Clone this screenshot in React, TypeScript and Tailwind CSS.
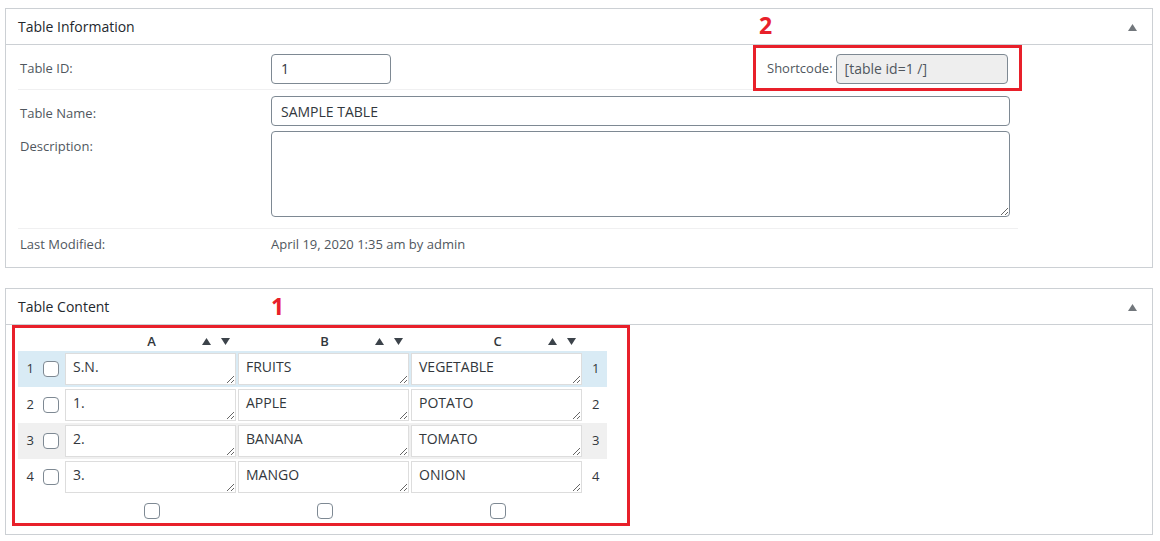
import React from "react";

const font = { fontFamily: '"Open Sans", "Liberation Sans", sans-serif' };

const rows = [
	["S.N.", "FRUITS", "VEGETABLE"],
	["1.", "APPLE", "POTATO"],
	["2.", "BANANA", "TOMATO"],
	["3.", "MANGO", "ONION"],
];

const rowBg = ["bg-[#d9ebf5]", "bg-white", "bg-[#f0f0f0]", "bg-white"];

const Caret = ({ dark }: { dark?: boolean }) => (
	<svg
		width="9"
		height="7"
		viewBox="0 0 9 7"
		className={dark ? "fill-[#3c434a]" : "fill-[#72777c]"}
	>
		<path d="M0 7 L4.5 0 L9 7 Z" />
	</svg>
);

const Box = () => (
	<span className="block w-4 h-4 rounded-[4px] border border-[#7e8993] bg-white" />
);

const PanelHeader = ({ title, mark }: { title: string; mark: React.ReactNode }) => (
	<div className="relative h-[36px] flex items-center px-[12px] border-b border-[#ccd0d4]">
		<h2 className="text-[14px] text-[#23282d]">{title}</h2>
		{mark}
		<span className="ml-auto mr-[3px] mt-[2px]">
			<Caret />
		</span>
	</div>
);

export default function App() {
	return (
		<div className="bg-white w-[1160px] h-[541px] pt-[8px] text-[13px] text-[#50575e]" style={font}>
			{/* Table Information */}
			<div className="ml-[5px] w-[1148px] border border-[#ccd0d4] bg-white">
				<PanelHeader
					title="Table Information"
					mark={
						<span className="absolute left-[753px] top-[5px] text-[23px] font-bold text-[#e8202a] leading-none">
							2
						</span>
					}
				/>
				<div className="relative pl-[12px] w-[1012px]">
					<div className="flex items-center h-[45px] border-b border-[#f0f0f1]">
						<span className="w-[253px] pl-[2px] pt-[4px]">Table ID:</span>
						<div className="w-[120px] h-[30px] mt-[3px] rounded-[4px] border border-[#7e8993] px-[9px] flex items-center text-[14px] text-[#32373c]">
							1
						</div>
						<div className="ml-[376px] mt-[3px] flex items-center gap-[3px]">
							<span>Shortcode:</span>
							<div className="w-[172px] h-[30px] rounded-[4px] border border-[#7e8993] bg-[#eeeeee] px-[8px] flex items-center text-[14px] text-[#50575e]">
								[table id=1 /]
							</div>
						</div>
						<div className="absolute left-[747px] top-[0px] w-[269px] h-[46px] border-[3px] border-[#e8202a]" />
					</div>
					<div className="flex pt-[6px]">
						<span className="w-[253px] pl-[2px] pt-[8px]">Table Name:</span>
						<div className="w-[739px] h-[30px] rounded-[4px] border border-[#7e8993] px-[9px] flex items-center text-[14px] text-[#32373c]">
							SAMPLE TABLE
						</div>
					</div>
					<div className="flex pt-[5px] pb-[11px] border-b border-[#f0f0f1]">
						<span className="w-[253px] pl-[2px] pt-[6px]">Description:</span>
						<textarea
							readOnly
							className="block w-[739px] h-[86px] rounded-[4px] border border-[#7e8993] bg-white outline-none"
						/>
					</div>
					<div className="flex h-[38px] items-start pt-[6px]">
						<span className="w-[253px] pl-[2px]">Last Modified:</span>
						<span>April 19, 2020 1:35 am by admin</span>
					</div>
				</div>
			</div>

			{/* Table Content */}
			<div className="ml-[5px] mt-[20px] w-[1148px] h-[247px] border border-[#ccd0d4] bg-white">
				<PanelHeader
					title="Table Content"
					mark={
						<span className="absolute left-[265px] top-[6px] text-[23px] font-bold text-[#e8202a] leading-none">
							1
						</span>
					}
				/>
				<div className="ml-[6px] w-[618px] h-[201px] border-[3px] border-[#e8202a] pl-[3px] pt-[4px]">
					<div className="flex h-[19px] items-center text-[13px] text-[#32373c] font-semibold">
						<span className="w-[47px]" />
						{["A", "B", "C"].map((c) => (
							<div key={c} className="relative w-[173px] text-center">
								{c}
								<span className="absolute right-[8px] top-[6px] flex gap-[10px]">
									<Caret dark />
									<span className="rotate-180">
										<Caret dark />
									</span>
								</span>
							</div>
						))}
					</div>
					{rows.map((r, i) => (
						<div key={i} className={`flex items-center h-[36px] w-[589px] ${rowBg[i]}`}>
							<span className="w-[22px] text-right text-[13px] text-[#32373c] font-medium pr-[6px]">{i + 1}</span>
							<span className="w-[25px] pl-[3px] flex">
								<Box />
							</span>
							{r.map((v, j) => (
								<textarea
									key={j}
									readOnly
									value={v}
									className="block w-[171px] h-[32px] mr-[2px] border border-[#dddddd] bg-white px-[7px] py-[3px] text-[14px] text-[#32373c] leading-[20px] outline-none overflow-hidden"
								/>
							))}
							<span className="pl-[8px] text-[13px] text-[#32373c] font-medium">{i + 1}</span>
						</div>
					))}
					<div className="flex h-[28px] items-center pt-[3px]">
						<span className="w-[47px]" />
						{[0, 1, 2].map((k) => (
							<div key={k} className="w-[173px] flex justify-center">
								<Box />
							</div>
						))}
					</div>
				</div>
			</div>
		</div>
	);
}
